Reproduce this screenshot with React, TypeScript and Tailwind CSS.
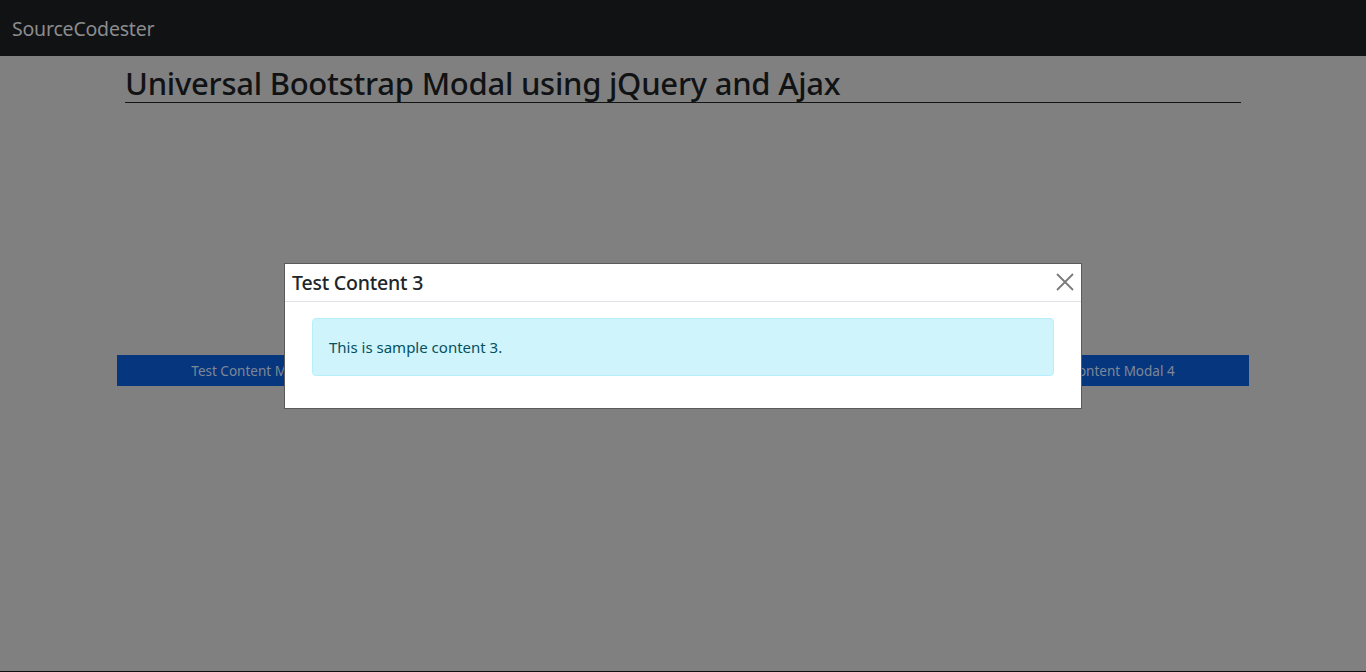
import React from "react";

export default function App() {
  const font = { fontFamily: '"Noto Sans", "Open Sans", sans-serif' };
  return (
    <div className="relative h-[672px] w-full overflow-hidden bg-[#808080] flex flex-col" style={font}>
      <nav className="h-14 bg-[#111214] flex items-center px-3 shrink-0">
        <span className="text-[19.5px] text-[#8b8c8e] tracking-[-0.2px] mt-[1px]">SourceCodester</span>
      </nav>
      <div className="w-[1116px] mx-auto pt-[9px]">
        <h2 className="text-[31px] leading-[37px] font-medium text-[#111214] border-b border-[#141414] tracking-[-0.25px]">
          Universal Bootstrap Modal using jQuery and Ajax
        </h2>
      </div>
      <div className="w-[1132px] mx-auto mt-[252px] grid grid-cols-4 h-[31px] bg-[#06377e]">
        {[1, 2, 3, 4].map((n) => (
          <div key={n} className="flex items-center justify-center text-[13.5px] text-[#7f8797] pt-[1px]">
            Test Content Modal {n}
          </div>
        ))}
      </div>
      <div className="flex-1" />
      <div className="h-px bg-[#101010] shrink-0" />

      <div className="absolute left-[284px] top-[263px] w-[798px] h-[146px] bg-white border border-[#5a5a5a] flex flex-col">
        <div className="h-[38px] border-b border-[#dee2e6] flex items-center justify-between pl-[7px] pr-[6px]">
          <span className="text-[19.5px] font-medium text-[#212529] tracking-[-0.2px] mt-[1px]">Test Content 3</span>
          <svg width="20" height="20" viewBox="0 0 20 20" className="mb-[2px]">
            <path d="M2 2 L18 18 M18 2 L2 18" stroke="#7a7a7a" strokeWidth="1.8" />
          </svg>
        </div>
        <div className="pt-4 px-[27px]">
          <div className="h-[58px] bg-[#cff4fc] border border-[#b6effb] rounded-[4px] flex items-center px-4 text-[15px] text-[#055160]">
            This is sample content 3.
          </div>
        </div>
      </div>
    </div>
  );
}
